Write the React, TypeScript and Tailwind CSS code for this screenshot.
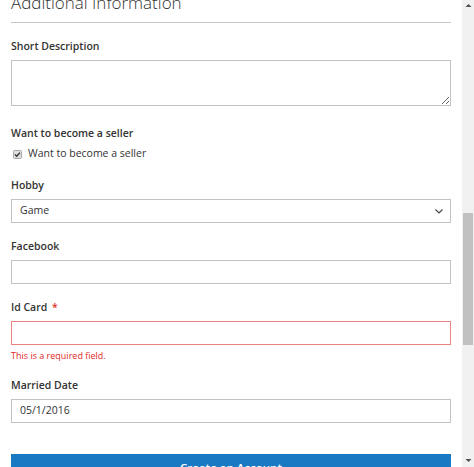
import React from "react";

const font = { fontFamily: '"Open Sans", "Liberation Sans", sans-serif' };

const Label = ({ children, mb = "mb-[7px]" }: { children: React.ReactNode; mb?: string }) => (
  <div className={`h-[14px] leading-[14px] text-[10.5px] font-semibold text-[#333] ${mb}`}>{children}</div>
);

const Input = ({ value = "", error = false }: { value?: string; error?: boolean }) => (
  <div
    className={`h-[24px] border flex items-center px-[8px] text-[10.5px] text-[#333] bg-white ${
      error ? "border-[#ed8380]" : "border-[#c2c2c2]"
    }`}
  >
    {value}
  </div>
);

const Scrollbar = () => (
  <div className="w-[12px] h-full bg-[#f1f1f1] flex flex-col items-center">
    <svg width="7" height="12" viewBox="0 0 7 12" className="shrink-0">
      <path d="M0.5 7 L3.5 4 L6.5 7 Z" fill="#505050" />
    </svg>
    <div className="mt-[201px] w-[10px] h-[132px] bg-[#c1c1c1]" />
    <div className="flex-1" />
    <svg width="7" height="12" viewBox="0 0 7 12" className="shrink-0">
      <path d="M0.5 4 L3.5 7 L6.5 4 Z" fill="#505050" />
    </svg>
  </div>
);

export default function App() {
  return (
    <div className="h-screen w-full overflow-hidden flex bg-white" style={font}>
      <div className="flex-1 px-[11px] overflow-hidden">
        <div className="mt-[-9px] h-[24px] leading-[24px] text-[17px] font-light text-[#333] box-content pb-[7px] border-b border-[#c6c6c6]">
          Additional Information
        </div>

        <div className="mt-[16px]">
          <Label>Short Description</Label>
          <textarea className="block w-full h-[46px] border border-[#c2c2c2] outline-none px-[8px] text-[10.5px]" />
        </div>

        <div className="mt-[20px]">
          <Label mb="mb-[7px]">Want to become a seller</Label>
          <div className="h-[14px] flex items-center text-[10.5px] text-[#333]">
            <svg width="9" height="9" viewBox="0 0 9 9" className="ml-[2px] mr-[6px]">
              <rect x="0.5" y="0.5" width="8" height="8" rx="1" fill="#dedede" stroke="#a8a8a8" />
              <path d="M2 4.6 L3.7 6.2 L7 2.6" fill="none" stroke="#333" strokeWidth="1.4" />
            </svg>
            Want to become a seller
          </div>
        </div>

        <div className="mt-[17px]">
          <Label>Hobby</Label>
          <div className="h-[24px] border border-[#c2c2c2] flex items-center justify-between pl-[8px] pr-[6px] text-[10.5px] text-[#333]">
            <span>Game</span>
            <svg width="10" height="10" viewBox="0 0 10 10">
              <path d="M1.5 3.5 L5 7 L8.5 3.5" fill="none" stroke="#444" strokeWidth="1.1" />
            </svg>
          </div>
        </div>

        <div className="mt-[16px]">
          <Label>Facebook</Label>
          <Input />
        </div>

        <div className="mt-[16px]">
          <Label>
            Id Card <span className="text-[#e02b27] ml-[2px]">*</span>
          </Label>
          <Input error />
          <div className="mt-[5px] h-[12px] leading-[12px] text-[9px] text-[#e02b27]">This is a required field.</div>
        </div>

        <div className="mt-[16px]">
          <Label>Married Date</Label>
          <Input value="05/1/2016" />
        </div>

        <div className="mt-[31px] h-[40px] bg-[#1979c3] text-white text-[11.5px] font-semibold flex justify-center pt-[5px]">
          Create an Account
        </div>
      </div>
      <Scrollbar />
    </div>
  );
}
